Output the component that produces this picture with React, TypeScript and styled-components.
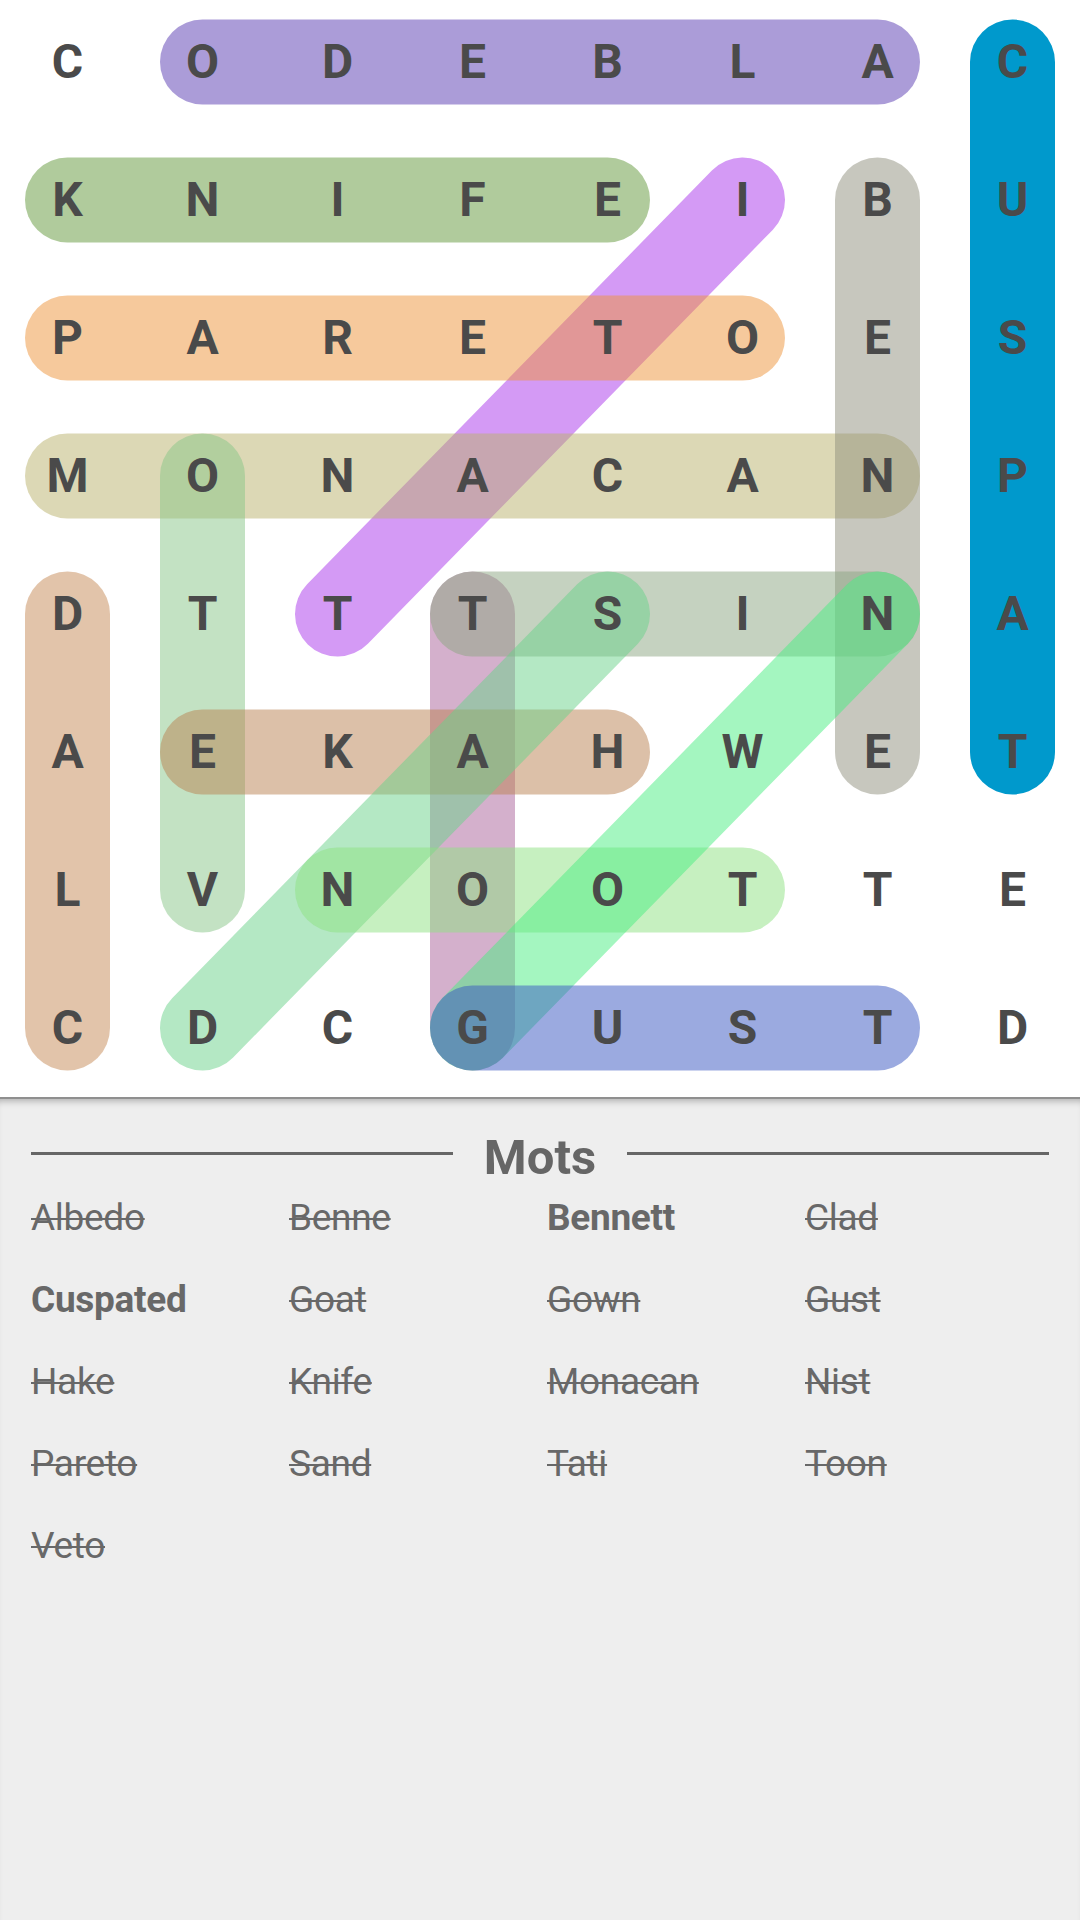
import React from "react";
import styled, { createGlobalStyle } from "styled-components";

const Global = createGlobalStyle`
  html, body { margin: 0; padding: 0; background: #eeeeee; }
  body { font-family: Roboto, "Noto Sans", "Liberation Sans", sans-serif; }
  #root { min-height: 1920px; }
`;

const GRID = [
  "CODEBLAC",
  "KNIFEIBU",
  "PARETOES",
  "MONACANP",
  "DTTTSINA",
  "AEKAHWET",
  "LVNOOTTE",
  "CDCGUSTD",
];

const CELL_W = 135;
const CELL_H = 138;
const cx = (c: number) => CELL_W / 2 + CELL_W * c;
const cy = (r: number) => CELL_H / 2 + CELL_H * r;

type Mark = { from: [number, number]; to: [number, number]; color: string };

// [col, row]
const MARKS: Mark[] = [
  { from: [2, 4], to: [5, 1], color: "rgba(169,53,235,0.5)" },
  { from: [1, 0], to: [6, 0], color: "rgba(87,57,177,0.5)" },
  { from: [0, 1], to: [4, 1], color: "rgba(97,151,57,0.5)" },
  { from: [0, 2], to: [5, 2], color: "rgba(237,147,57,0.5)" },
  { from: [0, 3], to: [6, 3], color: "rgba(185,177,107,0.5)" },
  { from: [6, 1], to: [6, 5], color: "rgba(143,143,125,0.5)" },
  { from: [1, 3], to: [1, 6], color: "rgba(135,197,135,0.5)" },
  { from: [0, 4], to: [0, 7], color: "rgba(197,137,85,0.5)" },
  { from: [3, 4], to: [3, 7], color: "rgba(169,97,153,0.5)" },
  { from: [1, 5], to: [4, 5], color: "rgba(185,129,81,0.5)" },
  { from: [3, 4], to: [6, 4], color: "rgba(139,165,129,0.5)" },
  { from: [1, 7], to: [4, 4], color: "rgba(105,209,137,0.5)" },
  { from: [2, 6], to: [5, 6], color: "rgba(141,225,129,0.5)" },
  { from: [3, 7], to: [6, 4], color: "rgba(73,237,129,0.5)" },
  { from: [3, 7], to: [6, 7], color: "rgba(55,85,193,0.5)" },
  { from: [7, 0], to: [7, 5], color: "#0099cc" },
];

const WORDS: [string, boolean][] = [
  ["Albedo", true],
  ["Benne", true],
  ["Bennett", false],
  ["Clad", true],
  ["Cuspated", false],
  ["Goat", true],
  ["Gown", true],
  ["Gust", true],
  ["Hake", true],
  ["Knife", true],
  ["Monacan", true],
  ["Nist", true],
  ["Pareto", true],
  ["Sand", true],
  ["Tati", true],
  ["Toon", true],
  ["Veto", true],
];

const Page = styled.div`
  width: 1080px;
  min-height: 1920px;
  display: flex;
  flex-direction: column;
  background: #eeeeee;
`;

const Board = styled.div`
  height: 1097px;
  overflow: hidden;
  background: #ffffff;
`;

const Field = styled.div`
  position: relative;
  margin-top: -7px;
  width: 1080px;
  height: ${CELL_H * 8}px;
`;

const Marks = styled.svg`
  position: absolute;
  left: 0;
  top: 0;
  width: 1080px;
  height: ${CELL_H * 8}px;
`;

const Letters = styled.div`
  position: relative;
  z-index: 1;
  display: grid;
  grid-template-columns: repeat(8, ${CELL_W}px);
  grid-template-rows: repeat(8, ${CELL_H}px);
`;

const Letter = styled.div`
  text-align: center;
  line-height: ${CELL_H}px;
  font-family: Roboto, "Noto Sans", sans-serif;
  font-weight: 700;
  font-size: 48px;
  color: #4a4a4a;
`;

const Panel = styled.div`
  flex: 1;
  background: #eeeeee;
  border-top: 2px solid #8f8f8f;
  box-shadow: inset 0 7px 7px -5px rgba(0, 0, 0, 0.28);
  padding: 35px 31px 0 31px;
`;

const Header = styled.div`
  display: flex;
  align-items: center;
  gap: 31px;
  margin-bottom: -5px;
`;

const Rule = styled.div`
  flex: 1;
  height: 3px;
  background: #666666;
  margin-bottom: 9px;
`;

const Title = styled.div`
  font-family: Roboto, "Noto Sans", sans-serif;
  font-weight: 700;
  font-size: 49px;
  line-height: 48px;
  color: #666666;
`;

const WordList = styled.div`
  display: grid;
  grid-template-columns: repeat(4, 258px);
  grid-auto-rows: 82px;
`;

const Word = styled.div<{ $found: boolean }>`
  font-family: Roboto, "Noto Sans", sans-serif;
  font-size: 37px;
  line-height: 82px;
  color: #686868;
  font-weight: ${(p) => (p.$found ? 400 : 700)};
  text-decoration: ${(p) => (p.$found ? "line-through" : "none")};
  text-decoration-thickness: 2px;
  letter-spacing: -0.3px;
`;

export default function App() {
  return (
    <Page>
      <Global />
      <Board>
        <Field>
          <Marks viewBox={`0 0 1080 ${CELL_H * 8}`}>
            {MARKS.map((m, i) => (
              <line
                key={i}
                x1={cx(m.from[0])}
                y1={cy(m.from[1])}
                x2={cx(m.to[0])}
                y2={cy(m.to[1])}
                stroke={m.color}
                strokeWidth={85}
                strokeLinecap="round"
              />
            ))}
          </Marks>
          <Letters>
            {GRID.flatMap((row, r) =>
              row.split("").map((ch, c) => <Letter key={`${r}-${c}`}>{ch}</Letter>)
            )}
          </Letters>
        </Field>
      </Board>
      <Panel>
        <Header>
          <Rule />
          <Title>Mots</Title>
          <Rule />
        </Header>
        <WordList>
          {WORDS.map(([w, found]) => (
            <Word key={w} $found={found}>
              {w}
            </Word>
          ))}
        </WordList>
      </Panel>
    </Page>
  );
}
